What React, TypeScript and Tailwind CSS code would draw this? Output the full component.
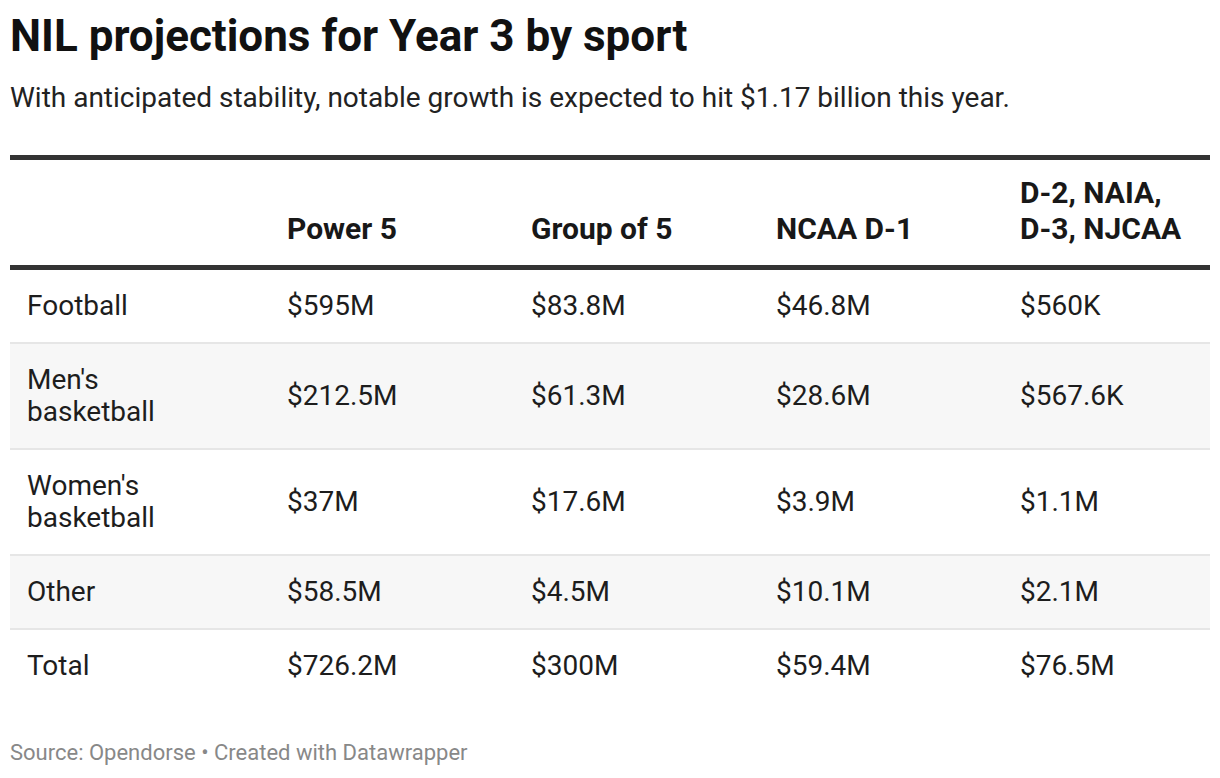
import React from 'react';

type Row = { sport: string; values: string[]; shaded: boolean };

const headers = ['Power 5', 'Group of 5', 'NCAA D-1', 'D-2, NAIA, D-3, NJCAA'];

const rows: Row[] = [
  { sport: 'Football', values: ['$595M', '$83.8M', '$46.8M', '$560K'], shaded: false },
  { sport: "Men's basketball", values: ['$212.5M', '$61.3M', '$28.6M', '$567.6K'], shaded: true },
  { sport: "Women's basketball", values: ['$37M', '$17.6M', '$3.9M', '$1.1M'], shaded: false },
  { sport: 'Other', values: ['$58.5M', '$4.5M', '$10.1M', '$2.1M'], shaded: true },
  { sport: 'Total', values: ['$726.2M', '$300M', '$59.4M', '$76.5M'], shaded: false },
];

const gridCols = 'grid grid-cols-[277px_244px_245px_244px_1fr]';

export default function App() {
  return (
    <div className="w-[1220px] h-[778px] bg-white px-[10px] font-['Roboto',sans-serif] text-[#1d1d1d]">
      <h1 className="pt-[10px] text-[44px] leading-[52px] font-bold text-[#111]">
        NIL projections for Year 3 by sport
      </h1>
      <p className="mt-[19px] text-[28px] leading-[34px] text-[#222]">
        With anticipated stability, notable growth is expected to hit $1.17 billion this year.
      </p>

      <div className="mt-[40px] border-t-[5px] border-[#333]">
        {/* header */}
        <div className={`${gridCols} items-end border-b-[5px] border-[#333] pt-[15px] pb-[18px] text-[30px] leading-[36px] font-bold text-[#181818]`}>
          <div />
          {headers.map((h) => (
            <div key={h}>
              {h === 'D-2, NAIA, D-3, NJCAA' ? (
                <>
                  D-2, NAIA,
                  <br />
                  D-3, NJCAA
                </>
              ) : (
                h
              )}
            </div>
          ))}
        </div>

        {/* body */}
        {rows.map((r, i) => (
          <div
            key={r.sport}
            className={`${gridCols} items-center py-5 text-[28px] leading-[32px] ${
              r.shaded ? 'bg-[#f7f7f7]' : 'bg-white'
            } ${i < rows.length - 1 ? 'border-b-2 border-[#e6e6e6]' : ''}`}
          >
            <div className="pl-[17px] pr-24">{r.sport}</div>
            {r.values.map((v, j) => (
              <div key={j}>{v}</div>
            ))}
          </div>
        ))}
      </div>

      <p className="mt-[38px] text-[22px] leading-[26px] text-[#888]">
        Source: Opendorse • Created with Datawrapper
      </p>
    </div>
  );
}
